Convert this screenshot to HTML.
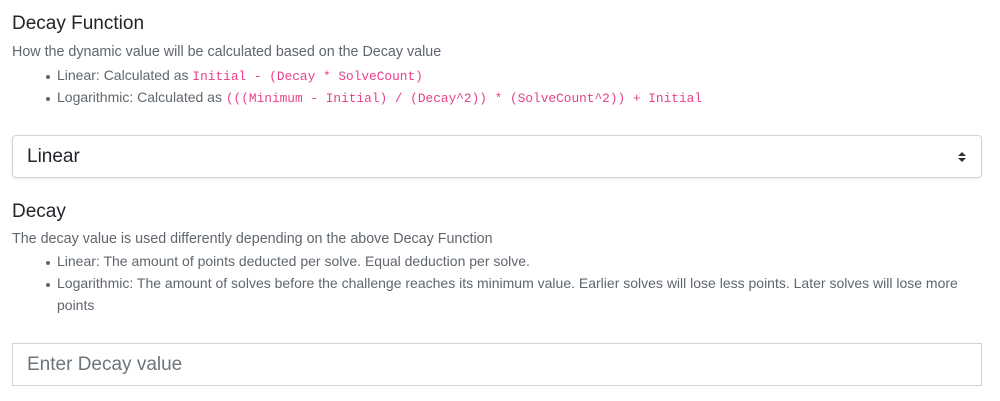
<!DOCTYPE html>
<html><head><style>
body{margin:0;background:#fff;font-family:"Liberation Sans",sans-serif;color:#212529;width:1000px;height:401px;overflow:hidden;position:relative}
.a{position:absolute;left:12px;white-space:nowrap}
.t{font-size:14.3px;color:#5f666d}
.li{position:absolute;left:57px;font-size:14px;color:#5f666d;white-space:nowrap}
.li:before{content:"";position:absolute;left:-11px;top:8px;width:4px;height:4px;border-radius:50%;background:#5f666d}
.li.nb:before{display:none}
code{font-family:"Liberation Mono",monospace;font-size:12.8px;color:#e83e8c}
.box{position:absolute;left:12px;width:970px;border:1px solid #ced4da;box-sizing:border-box;height:43px;border-radius:4px;font-size:19px;padding-left:14px;line-height:41px}
</style></head><body>
<div class="a" style="top:13px;font-size:19px">Decay Function</div>
<div class="a t" style="top:44px">How the dynamic value will be calculated based on the Decay value</div>
<div class="li" style="top:67px">Linear: Calculated as <code>Initial - (Decay * SolveCount)</code></div>
<div class="li" style="top:89px">Logarithmic: Calculated as <code>(((Minimum - Initial) / (Decay^2)) * (SolveCount^2)) + Initial</code></div>
<div class="box" style="top:135px;color:#212529;box-shadow:0 1px 2px rgba(0,0,0,.08)">Linear
<svg style="position:absolute;right:14px;top:15px" width="10" height="12" viewBox="0 0 10 12"><path d="M1 5L5 1L9 5Z M1 7L5 11L9 7Z" fill="#333"/></svg></div>
<div class="a" style="top:201px;font-size:19px">Decay</div>
<div class="a t" style="top:231px">The decay value is used differently depending on the above Decay Function</div>
<div class="li" style="top:253px">Linear: The amount of points deducted per solve. Equal deduction per solve.</div>
<div class="li" style="top:275px">Logarithmic: The amount of solves before the challenge reaches its minimum value. Earlier solves will lose less points. Later solves will lose more</div>
<div class="li nb" style="top:297px">points</div>
<div class="box" style="top:343px;border-radius:0;color:#6c757d">Enter Decay value</div>
</body></html>
